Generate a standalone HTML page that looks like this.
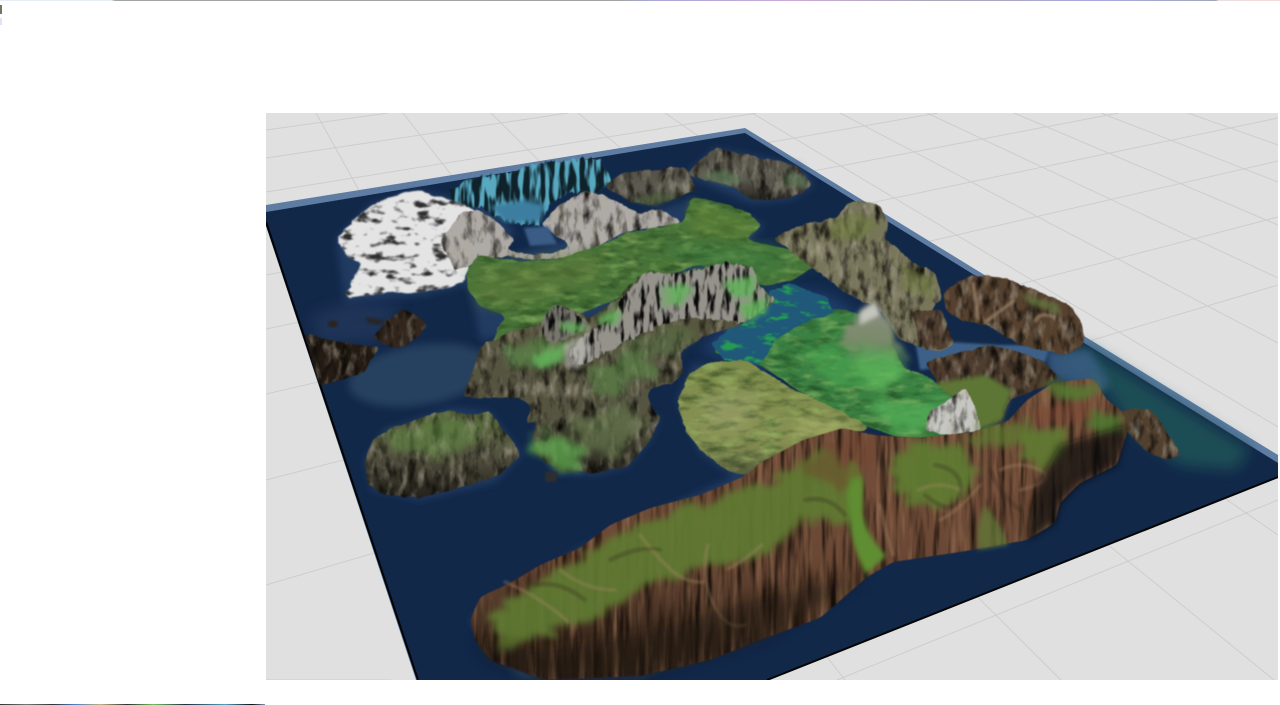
<!DOCTYPE html>
<html><head><meta charset="utf-8"><title>Terrain</title>
<style>html,body{margin:0;padding:0;background:#fff;width:1280px;height:705px;overflow:hidden}svg{position:absolute;left:0;top:0;display:block}</style></head>
<body>
<svg width="1280" height="705" viewBox="0 0 1280 705" xmlns="http://www.w3.org/2000/svg">
<defs>
<linearGradient id="tp" x1="0" x2="1" y1="0" y2="0"><stop offset="0" stop-color="#e8eef8"/><stop offset=".087" stop-color="#e8eef8"/><stop offset=".09" stop-color="#a2a6a2"/><stop offset=".48" stop-color="#a0a4a0"/><stop offset=".51" stop-color="#a9a8d8"/><stop offset=".62" stop-color="#cbaad8"/><stop offset=".74" stop-color="#a8a8b8"/><stop offset=".86" stop-color="#aaa8e0"/><stop offset=".95" stop-color="#a0a8b8"/><stop offset=".952" stop-color="#e8e0e0"/><stop offset="1" stop-color="#f8d8d8"/></linearGradient>
<linearGradient id="bt" x1="0" x2="1" y1="0" y2="0"><stop offset="0" stop-color="#333"/><stop offset=".1" stop-color="#777"/><stop offset=".2" stop-color="#333"/><stop offset=".28" stop-color="#4a80c0"/><stop offset=".38" stop-color="#c0b080"/><stop offset=".48" stop-color="#303030"/><stop offset=".58" stop-color="#70c060"/><stop offset=".7" stop-color="#203040"/><stop offset=".85" stop-color="#50a0c0"/><stop offset=".95" stop-color="#101010"/><stop offset="1" stop-color="#8090b0"/></linearGradient>
<linearGradient id="gB" x1="0" x2="0" y1="0" y2="1"><stop offset="0" stop-color="#7a543f"/><stop offset=".6" stop-color="#694734"/><stop offset=".85" stop-color="#3f2c20"/><stop offset="1" stop-color="#2a1d15"/></linearGradient>
<linearGradient id="gD" x1="0" x2="0" y1="0" y2="1"><stop offset="0" stop-color="#514e44"/><stop offset=".55" stop-color="#5f5d52"/><stop offset="1" stop-color="#24221e"/></linearGradient>
<linearGradient id="gI" x1="0" x2="0" y1="0" y2="1"><stop offset="0" stop-color="#566a3b"/><stop offset=".5" stop-color="#545240"/><stop offset="1" stop-color="#221f19"/></linearGradient>
<linearGradient id="gC" x1="0" x2="0" y1="0" y2="1"><stop offset="0" stop-color="#4c7a3e"/><stop offset=".3" stop-color="#57543f"/><stop offset=".75" stop-color="#545440"/><stop offset="1" stop-color="#2a281f"/></linearGradient>
<linearGradient id="gO" x1="0" x2="0" y1="0" y2="1"><stop offset="0" stop-color="#7c8a4a"/><stop offset=".7" stop-color="#879153"/><stop offset="1" stop-color="#55593a"/></linearGradient>
<linearGradient id="gP" x1="0" x2="0" y1="0" y2="1"><stop offset="0" stop-color="#8e8e84"/><stop offset=".55" stop-color="#7a8a6a"/><stop offset="1" stop-color="#4a9a52" stop-opacity="0"/></linearGradient>
<filter id="rk" x="-10%" y="-10%" width="120%" height="120%" color-interpolation-filters="sRGB">
<feGaussianBlur in="SourceGraphic" stdDeviation="2.5" result="g0"/>
<feColorMatrix in="g0" type="matrix" values="1 0 0 0 0 0 1 0 0 0 0 0 1 0 0 0 0 0 12 -5.5" result="g"/>
<feTurbulence type="fractalNoise" baseFrequency=".12 .05" numOctaves="4" seed="4" result="n"/>
<feDisplacementMap in="g" in2="n" scale="4" xChannelSelector="R" yChannelSelector="G" result="d"/>
<feColorMatrix in="n" type="matrix" values="0 0 0 0 .05 0 0 0 0 .04 0 0 0 0 .03 2.4 0 0 0 -1.1" result="a"/>
<feColorMatrix in="n" type="matrix" values="0 0 0 0 .7 0 0 0 0 .67 0 0 0 0 .6 0 1.6 0 0 -.8" result="b"/>
<feComposite in="a" in2="d" operator="in" result="a2"/><feComposite in="b" in2="d" operator="in" result="b2"/>
<feMerge result="m"><feMergeNode in="d"/><feMergeNode in="a2"/><feMergeNode in="b2"/></feMerge>
<feGaussianBlur in="m" stdDeviation=".6"/></filter>
<filter id="rh" x="-10%" y="-10%" width="120%" height="120%" color-interpolation-filters="sRGB">
<feGaussianBlur in="SourceGraphic" stdDeviation="2" result="g0"/>
<feColorMatrix in="g0" type="matrix" values="1 0 0 0 0 0 1 0 0 0 0 0 1 0 0 0 0 0 12 -5.5" result="g"/>
<feTurbulence type="fractalNoise" baseFrequency=".2 .045" numOctaves="3" seed="8" result="n"/>
<feDisplacementMap in="g" in2="n" scale="7" xChannelSelector="R" yChannelSelector="G" result="d"/>
<feColorMatrix in="n" type="matrix" values="0 0 0 0 .03 0 0 0 0 .03 0 0 0 0 .03 4.5 0 0 0 -2.2" result="a"/>
<feComposite in="a" in2="d" operator="in" result="a2"/>
<feMerge result="m"><feMergeNode in="d"/><feMergeNode in="a2"/></feMerge>
<feGaussianBlur in="m" stdDeviation=".5"/></filter>
<filter id="st" x="-5%" y="-5%" width="110%" height="110%" color-interpolation-filters="sRGB">
<feGaussianBlur in="SourceGraphic" stdDeviation="3.5" result="g0"/>
<feColorMatrix in="g0" type="matrix" values="1 0 0 0 0 0 1 0 0 0 0 0 1 0 0 0 0 0 14 -6.5" result="d"/>
<feTurbulence type="fractalNoise" baseFrequency=".16 .014" numOctaves="3" seed="9" result="n"/>
<feColorMatrix in="n" type="matrix" values="0 0 0 0 .08 0 0 0 0 .05 0 0 0 0 .03 2.6 0 0 0 -1.15" result="a"/>
<feColorMatrix in="n" type="matrix" values="0 0 0 0 .62 0 0 0 0 .46 0 0 0 0 .34 0 1.8 0 0 -.92" result="b"/>
<feComposite in="a" in2="d" operator="in" result="a2"/><feComposite in="b" in2="d" operator="in" result="b2"/>
<feMerge result="m"><feMergeNode in="d"/><feMergeNode in="a2"/><feMergeNode in="b2"/></feMerge>
<feGaussianBlur in="m" stdDeviation=".6"/></filter>
<filter id="gr" x="-5%" y="-5%" width="110%" height="110%" color-interpolation-filters="sRGB">
<feGaussianBlur in="SourceGraphic" stdDeviation="3" result="g0"/>
<feColorMatrix in="g0" type="matrix" values="1 0 0 0 0 0 1 0 0 0 0 0 1 0 0 0 0 0 12 -5.5" result="g"/>
<feTurbulence type="fractalNoise" baseFrequency=".05 .13" numOctaves="4" seed="7" result="n"/>
<feDisplacementMap in="g" in2="n" scale="4" xChannelSelector="R" yChannelSelector="G" result="d"/>
<feColorMatrix in="n" type="matrix" values="0 0 0 0 .1 0 0 0 0 .2 0 0 0 0 .08 1.5 0 0 0 -.7" result="a"/>
<feColorMatrix in="n" type="matrix" values="0 0 0 0 .62 0 0 0 0 .75 0 0 0 0 .42 0 1.5 0 0 -.72" result="b"/>
<feComposite in="a" in2="d" operator="in" result="a2"/><feComposite in="b" in2="d" operator="in" result="b2"/>
<feMerge result="m"><feMergeNode in="d"/><feMergeNode in="a2"/><feMergeNode in="b2"/></feMerge>
<feGaussianBlur in="m" stdDeviation=".6"/></filter>
<filter id="sn" x="-10%" y="-10%" width="120%" height="120%" color-interpolation-filters="sRGB">
<feGaussianBlur in="SourceGraphic" stdDeviation="3" result="g0"/>
<feColorMatrix in="g0" type="matrix" values="1 0 0 0 0 0 1 0 0 0 0 0 1 0 0 0 0 0 8 -3.5" result="g"/>
<feTurbulence type="fractalNoise" baseFrequency=".065 .13" numOctaves="3" seed="12" result="n"/>
<feDisplacementMap in="g" in2="n" scale="5" xChannelSelector="R" yChannelSelector="G" result="d"/>
<feColorMatrix in="n" type="matrix" values="0 0 0 0 .18 0 0 0 0 .18 0 0 0 0 .18 5 0 0 0 -2.7" result="a"/>
<feComposite in="a" in2="d" operator="in" result="a2"/>
<feMerge result="m"><feMergeNode in="d"/><feMergeNode in="a2"/></feMerge>
<feGaussianBlur in="m" stdDeviation=".8"/></filter>
<filter id="cy" x="-10%" y="-10%" width="120%" height="120%" color-interpolation-filters="sRGB">
<feTurbulence type="fractalNoise" baseFrequency=".2 .035" numOctaves="2" seed="5" result="n"/>
<feDisplacementMap in="SourceGraphic" in2="n" scale="8" xChannelSelector="R" yChannelSelector="G" result="d"/>
<feColorMatrix in="n" type="matrix" values="0 0 0 0 .06 0 0 0 0 .13 0 0 0 0 .16 6 0 0 0 -2.4" result="a"/>
<feComposite in="a" in2="d" operator="in" result="a2"/>
<feMerge result="m"><feMergeNode in="d"/><feMergeNode in="a2"/></feMerge>
<feGaussianBlur in="m" stdDeviation=".5"/></filter>
<filter id="fr" x="-10%" y="-10%" width="120%" height="120%" color-interpolation-filters="sRGB">
<feGaussianBlur in="SourceGraphic" stdDeviation="2" result="g0"/>
<feColorMatrix in="g0" type="matrix" values="1 0 0 0 0 0 1 0 0 0 0 0 1 0 0 0 0 0 10 -4.5" result="g"/>
<feTurbulence type="fractalNoise" baseFrequency=".05 .14" numOctaves="3" seed="21" result="n"/>
<feDisplacementMap in="g" in2="n" scale="6" xChannelSelector="R" yChannelSelector="G" result="d"/>
<feColorMatrix in="n" type="matrix" values="0 0 0 0 .15 0 0 0 0 .6 0 0 0 0 .33 7 0 0 0 -3.9" result="a"/>
<feComposite in="a" in2="d" operator="in" result="a2"/>
<feMerge result="m"><feMergeNode in="d"/><feMergeNode in="a2"/></feMerge>
<feGaussianBlur in="m" stdDeviation=".4"/></filter>
<filter id="pt" x="-15%" y="-15%" width="130%" height="130%" color-interpolation-filters="sRGB">
<feTurbulence type="fractalNoise" baseFrequency=".03 .09" numOctaves="3" seed="31" result="n"/>
<feDisplacementMap in="SourceGraphic" in2="n" scale="24" xChannelSelector="R" yChannelSelector="G" result="d"/>
<feGaussianBlur in="d" stdDeviation="3.5"/></filter>
<filter id="ph" x="-20%" y="-20%" width="140%" height="140%" color-interpolation-filters="sRGB">
<feTurbulence type="fractalNoise" baseFrequency=".12 .04" numOctaves="3" seed="14" result="n"/>
<feDisplacementMap in="SourceGraphic" in2="n" scale="14" xChannelSelector="R" yChannelSelector="G" result="d"/>
<feGaussianBlur in="d" stdDeviation="2.6"/></filter>
<filter id="b1"><feGaussianBlur stdDeviation="1.2"/></filter>
<filter id="b2"><feGaussianBlur stdDeviation="2"/></filter>
<filter id="b4" x="-20%" y="-20%" width="140%" height="140%"><feGaussianBlur stdDeviation="4"/></filter>
<filter id="b7" x="-20%" y="-20%" width="140%" height="140%"><feGaussianBlur stdDeviation="7"/></filter>
<clipPath id="cv"><rect x="266" y="113" width="1012" height="567"/></clipPath>
</defs>
<rect width="1280" height="705" fill="#fff"/>
<rect x="0" y="0" width="1280" height="1" fill="url(#tp)"/>
<rect x="0" y="5" width="2" height="9" fill="#6d7a60"/>
<rect x="0" y="18" width="2" height="7" fill="#dfe3f8"/>
<rect x="0" y="704" width="265" height="1" fill="url(#bt)"/>
<g clip-path="url(#cv)">
<rect x="266" y="113" width="1012" height="567" fill="#e0e0e0"/>
<g stroke="#cdcdcd" stroke-width="1" fill="none">
<path d="M266 130L388 113M266 158L568 113M266 192L757 113M266 230L938 113M266 275L1119 113M266 329L1278 118M266 394L1278 161M266 480L1278 217M266 585L1278 285M266 680L391 680M837 680L1278 500"/>
<path d="M316 113L631 680M403 113L845 680M491 113L1061 680M578 113L1274 680M665 113L1278 535M752 113L1278 427M840 113L1278 343M927 113L1278 278M1014 113L1278 225M1101 113L1278 182M1188 113L1278 145"/>
</g>
<polygon points="266,205 745,128 1278,455 1278,478 768,680 416,680 266,226" fill="#5f7da3"/>
<polygon points="266,212 745,133 1278,463 1278,477 767,680 419,680 266,222" fill="#122849"/>
<path d="M418 680L266 222" stroke="#050505" stroke-width="2.2" fill="none"/>
<path d="M767 680L1278 477" stroke="#050505" stroke-width="2" fill="none"/>

<!-- teal water and light water -->
<polygon points="1085,346 1250,450 1235,470 1180,465 1130,430 1110,395 1050,365" fill="#1d4e54" filter="url(#b7)"/>
<polygon points="1045,350 1090,350 1110,385 1090,395 1050,375" fill="#3d6088" opacity=".75" filter="url(#b4)"/>
<ellipse cx="420" cy="375" rx="72" ry="30" fill="#28405f" filter="url(#b4)" transform="rotate(-9 420 375)"/>
<polygon points="310,318 350,300 400,305 380,340 320,345" fill="#2a4166" opacity=".5" filter="url(#b7)"/>
<polygon points="700,350 770,285 830,295 880,330 760,372" fill="#26477a" opacity=".7" filter="url(#b7)"/>
<polygon points="915,340 1000,345 1050,345 1045,362 990,360 920,370" fill="#3c6088" filter="url(#b1)"/>

<!-- halos -->
<g fill="#2d4b74" opacity=".55" filter="url(#b4)">
<polygon points="336,240 370,205 415,190 490,205 515,232 465,285 420,296 345,301"/>
<polygon points="365,460 385,430 450,408 490,412 522,455 495,482 420,500 372,490"/>
<polygon points="532,437 560,390 660,417 650,440 627,467 593,475 557,472"/>
<polygon points="677,400 695,362 870,425 800,448 765,473 735,478 700,452"/>
<polygon points="686,175 715,148 800,165 814,185 790,200 750,203"/>
<polygon points="467,270 530,250 690,200 765,225 700,300 480,340"/>
<polygon points="470,620 580,548 780,455 780,600 640,678 520,680"/>
</g>

<!-- cyan -->
<polygon points="450,190 468,180 490,175 515,172 530,164 570,160 600,158 612,182 600,192 570,192 548,205 540,226 505,222 480,208 455,208" fill="#58a8c0" filter="url(#cy)"/>
<polygon points="490,206 525,200 545,205 540,222 505,222" fill="#3d7ea0" filter="url(#b2)"/>
<!-- snow mountain -->
<polygon points="336,240 348,225 372,205 395,195 415,190 445,198 462,204 478,212 468,238 472,260 464,280 450,288 420,292 385,293 345,298 352,280 362,265 348,255" fill="#e4e4e4" filter="url(#sn)"/>
<!-- grey/white rock beside snow -->
<polygon points="440,240 462,212 480,210 497,222 515,240 505,250 530,255 560,252 570,245 540,225 560,205 587,190 615,200 640,215 660,208 684,224 655,228 625,232 600,245 570,258 530,260 505,256 480,262 455,270" fill="#aeaaa6" filter="url(#rk)"/>
<polygon points="524,228 548,226 557,244 530,246" fill="#3a5c85" filter="url(#b1)"/>
<!-- dark ridge top center -->
<polygon points="604,185 625,172 650,170 685,167 698,190 672,200 650,206 630,202" fill="url(#gD)" filter="url(#rk)"/>
<polygon points="630,200 660,192 680,195 655,206" fill="#5a6f4a" opacity=".6" filter="url(#b2)"/>
<!-- top right isle -->
<polygon points="686,175 700,160 716,148 740,153 760,158 785,162 800,168 812,186 795,197 770,200 750,199 735,188 715,182" fill="url(#gD)" filter="url(#rk)"/>
<polygon points="700,174 725,170 745,180 730,186 710,180" fill="#5d7d58" opacity=".7" filter="url(#b2)"/>
<polygon points="785,172 805,176 808,188 785,186" fill="#5d7d58" opacity=".6" filter="url(#b2)"/>

<!-- green plain -->
<polygon points="467,268 480,255 520,262 560,258 600,245 625,234 655,228 684,222 690,197 725,203 748,212 762,226 745,240 770,245 800,252 815,266 790,282 760,285 740,275 700,265 660,278 640,290 590,310 550,325 510,340 490,345 505,315 480,306 467,290" fill="#487338" filter="url(#gr)"/>
<polygon points="470,270 545,258 600,252 600,280 520,306 480,305" fill="#5f7a3a" opacity=".55" filter="url(#b7)"/>
<polygon points="690,200 755,222 745,240 690,232" fill="#5e8139" opacity=".6" filter="url(#b4)"/>
<polygon points="650,245 770,245 810,265 760,282 690,262" fill="#3e7d41" opacity=".55" filter="url(#b7)"/>

<!-- right olive/grey mountains -->
<polygon points="773,238 800,225 835,218 852,200 880,205 888,222 885,238 912,262 935,272 942,300 930,310 945,322 955,345 935,352 915,345 900,340 880,310 850,295 815,270" fill="#77755a" filter="url(#rk)"/>
<polygon points="830,222 860,212 880,225 860,240 830,238" fill="#6f7d40" opacity=".6" filter="url(#b2)"/>
<polygon points="900,265 935,278 935,300 905,290" fill="#6f7d40" opacity=".5" filter="url(#b2)"/>
<polygon points="912,310 942,310 955,345 930,352 918,340" fill="#4e3b2d" opacity=".9" filter="url(#rk)"/>
<!-- brown isle -->
<polygon points="943,293 955,283 975,275 1005,278 1030,288 1070,305 1082,325 1085,340 1070,355 1050,352 1020,345 985,325 960,320 946,310" fill="#56412f" filter="url(#rk)"/>
<path d="M973 282L978 320M1015 300L985 322M1035 322Q1040 310 1055 318" stroke="#a48e75" stroke-width="3" fill="none" opacity=".7" filter="url(#b1)"/>
<polygon points="1020,292 1060,305 1060,315 1030,305" fill="#66723f" opacity=".8" filter="url(#b2)"/>
<!-- brown south -->
<polygon points="925,362 960,352 990,345 1020,352 1045,362 1060,378 1030,392 1010,400 1003,420 975,428 960,395 940,385" fill="#4e3d2e" filter="url(#rk)"/>
<polygon points="925,385 985,375 1012,390 1002,420 980,428 965,405" fill="#5d7636" filter="url(#b2)"/>

<!-- bright green region -->
<polygon points="712,352 735,330 770,300 845,310 880,320 905,370 925,375 950,395 978,428 940,438 900,438 860,424 800,392 760,365" fill="#3a8042" filter="url(#gr)"/>
<polygon points="862,322 895,355 912,372 880,392 855,370" fill="#63bf5e" opacity=".7" filter="url(#pt)"/>
<polygon points="800,345 850,350 870,385 830,385" fill="#4caa53" opacity=".6" filter="url(#pt)"/>
<polygon points="870,405 945,400 935,432 890,432" fill="#56b45a" opacity=".7" filter="url(#pt)"/>
<!-- fractal lake -->
<polygon points="770,292 790,284 825,297 835,312 800,325 775,340 760,365 725,360 710,345 730,328 745,320" fill="#1f5878" filter="url(#fr)"/>
<!-- peak -->
<polygon points="838,340 858,310 875,302 893,325 908,360 880,372 850,365" fill="url(#gP)" filter="url(#ph)"/>
<polygon points="860,312 875,303 880,315 860,325" fill="#d8d8d4" filter="url(#b2)" opacity=".75"/>

<!-- central massif (one connected mass) -->
<polygon points="463,397 472,372 482,345 510,332 545,322 560,305 590,318 620,297 643,270 680,273 727,262 753,267 760,287 777,300 740,325 703,337 680,353 684,373 673,383 650,388 647,397 660,417 653,437 627,467 593,473 557,470 535,453 532,437 538,420 525,425 532,407 520,398 480,398" fill="url(#gC)" filter="url(#rk)"/>
<!-- massif green patches -->
<g filter="url(#pt)">
<polygon points="528,436 548,428 590,450 580,470 552,468 532,452" fill="#5da14c" opacity=".8"/>
<polygon points="565,425 620,408 650,420 615,455 585,450" fill="#667a4c" opacity=".6"/>
<polygon points="500,345 545,335 570,345 545,368 510,368" fill="#5b8d4a" opacity=".6"/>
<polygon points="590,370 640,350 660,372 620,388 592,392" fill="#5c8848" opacity=".6"/>
<polygon points="620,338 670,325 700,335 670,355 630,360" fill="#5a7a48" opacity=".45"/>
</g>
<!-- high ridge -->
<polygon points="568,355 582,335 610,320 622,300 643,272 680,274 727,262 752,268 760,288 775,300 745,322 712,320 690,318 660,325 620,345 596,358 580,366" fill="#94928a" filter="url(#rh)"/>
<polygon points="540,322 556,303 575,312 590,325 565,340 548,345" fill="#77756c" filter="url(#rh)"/>
<polygon points="563,345 582,335 592,350 580,368 565,368" fill="#c4c4c0" opacity=".55" filter="url(#b2)"/>
<g fill="#62b25a" filter="url(#ph)" opacity=".85">
<polygon points="725,282 752,276 752,296 732,298"/>
<polygon points="738,306 770,296 768,315 744,320"/>
<polygon points="662,288 690,285 684,302 668,306"/>
<polygon points="560,322 590,325 584,332 562,332"/>
<polygon points="596,318 622,306 620,320 600,326"/>
<polygon points="532,355 565,345 560,362 538,368"/>
</g>

<!-- white small peak -->
<polygon points="930,412 948,400 965,388 974,405 982,430 950,436 925,430" fill="#c6c6c2" filter="url(#rk)"/>

<!-- olive plateau -->
<polygon points="677,402 690,372 712,362 745,360 790,388 835,408 872,428 830,440 795,445 775,462 750,475 728,472 700,450 685,430" fill="url(#gO)" filter="url(#gr)"/>
<polygon points="700,395 760,390 750,430 710,430" fill="#a8a87a" opacity=".35" filter="url(#b7)"/>
<polygon points="800,415 860,425 825,438 790,435" fill="#a8ae68" opacity=".55" filter="url(#b4)"/>

<!-- left island -->
<polygon points="365,462 372,440 392,428 430,415 450,410 470,415 490,412 512,440 520,456 500,475 460,488 418,498 385,495 368,485" fill="url(#gI)" filter="url(#rk)"/>
<polygon points="385,432 450,420 490,440 440,458 395,450" fill="#638a45" opacity=".55" filter="url(#pt)"/>
<!-- dark land left -->
<polygon points="304,333 330,340 360,345 382,348 370,360 365,372 335,382 320,386 315,370" fill="#241c14" filter="url(#rk)"/>
<polygon points="373,338 385,322 405,308 420,318 428,326 412,342 400,348 385,345" fill="#33271e" filter="url(#rk)"/>
<ellipse cx="333" cy="324" rx="5" ry="3.5" fill="#2a221c" filter="url(#b1)"/>
<polygon points="365,317 385,320 380,325 368,323" fill="#2a221c" opacity=".8" filter="url(#b1)"/>
<polygon points="545,472 558,472 556,482 546,482" fill="#2e2e2e" filter="url(#b1)"/>

<!-- far right cape -->
<polygon points="1120,412 1130,408 1150,410 1160,420 1175,445 1180,456 1165,460 1145,450 1125,430" fill="#52402f" filter="url(#rk)"/>

<!-- big island -->
<polygon points="470,620 480,597 510,583 540,565 580,548 610,525 650,508 700,495 745,476 760,463 803,440 843,428 873,435 917,438 973,432 1007,422 1027,400 1053,383 1093,378 1107,400 1123,412 1127,433 1117,465 1080,483 1060,503 1055,523 1027,540 960,552 893,562 867,577 850,592 820,618 760,640 710,660 640,676 545,680 490,660 475,640" fill="url(#gB)" filter="url(#st)"/>
<g filter="url(#pt)" fill="#5f7a32">
<polygon points="492,612 520,592 580,558 640,520 700,505 745,490 790,470 830,450 860,478 850,525 800,520 760,555 690,570 640,590 590,620 530,640 500,650" opacity=".92"/>
<polygon points="893,450 960,440 975,470 965,495 930,510 895,495" opacity=".95"/>
<polygon points="1020,430 1065,425 1070,450 1045,470 1025,462" opacity=".92"/>
<polygon points="1040,383 1095,378 1105,392 1060,400" fill="#567a32" opacity=".9"/>
<polygon points="1090,412 1122,412 1125,435 1098,440" fill="#4f7a30" opacity=".85"/>
<polygon points="960,436 1030,420 1040,438 980,452" opacity=".75"/>
</g>
<g fill="#5f8d30" filter="url(#b2)">
<path d="M851 458Q866 470 862 505Q862 530 886 556L866 574Q848 540 848 500Q845 470 851 458Z"/>
<path d="M985 505Q1005 530 1008 545L978 550Q975 525 985 505Z" fill="#5f7a38" opacity=".7"/>
</g>
<g fill="none" stroke-linecap="round" filter="url(#b1)">
<g stroke="#a88a64" stroke-width="3" opacity=".4">
<path d="M505 582Q525 590 544 603T568 622"/><path d="M640 535Q655 555 670 569T703 582"/><path d="M708 545Q700 575 713 603T745 625"/><path d="M762 545Q745 560 728 569"/><path d="M918 490Q940 480 960 490"/><path d="M1000 470Q1020 460 1040 470T1020 490"/><path d="M880 505Q885 530 893 555"/><path d="M560 570Q585 590 615 590"/><path d="M940 520Q960 510 980 485"/>
</g>
<g stroke="#2c1d14" stroke-width="3" opacity=".35">
<path d="M805 500Q830 495 845 515"/><path d="M935 465Q965 470 960 495T925 495"/><path d="M990 470Q1000 495 1020 510"/><path d="M610 560Q640 545 660 550"/><path d="M535 585Q560 580 585 600"/>
</g>
</g>
<polygon points="1060,445 1127,425 1117,465 1080,483 1060,503 1055,523 1027,540 1035,490" fill="#100b07" opacity=".72" filter="url(#b4)"/>
<polygon points="475,640 490,660 545,680 640,676 760,640 867,577 840,580 750,600 640,635 540,650" fill="#1a120c" opacity=".5" filter="url(#b7)"/>
<polygon points="1027,410 1090,400 1095,420 1035,425" fill="#7f4a36" opacity=".5" filter="url(#ph)"/>
<polygon points="845,430 880,438 870,470 840,490 800,470" fill="#70432f" opacity=".45" filter="url(#ph)"/>
</g>
</svg>
</body></html>
